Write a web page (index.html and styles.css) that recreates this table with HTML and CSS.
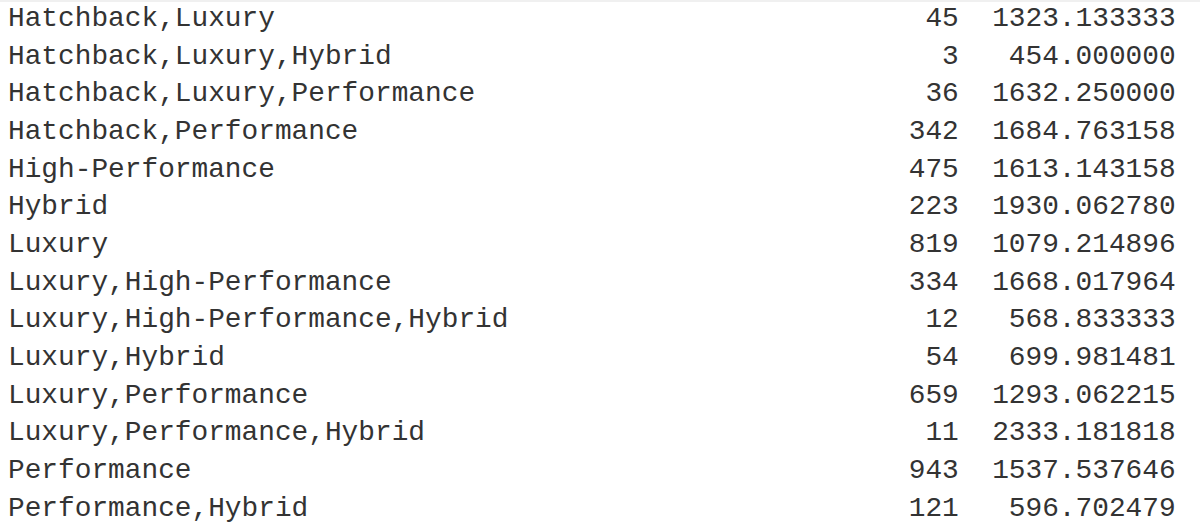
FILE: index.html
```html
<!DOCTYPE html>
<html>
<head>
<meta charset="utf-8">
<link rel="stylesheet" href="styles.css">
</head>
<body>
<div class="topline"></div>
<div class="table">
  <div class="row"><span class="name">Hatchback,Luxury</span><span class="count">45</span><span class="mean">1323.133333</span></div>
  <div class="row"><span class="name">Hatchback,Luxury,Hybrid</span><span class="count">3</span><span class="mean">454.000000</span></div>
  <div class="row"><span class="name">Hatchback,Luxury,Performance</span><span class="count">36</span><span class="mean">1632.250000</span></div>
  <div class="row"><span class="name">Hatchback,Performance</span><span class="count">342</span><span class="mean">1684.763158</span></div>
  <div class="row"><span class="name">High-Performance</span><span class="count">475</span><span class="mean">1613.143158</span></div>
  <div class="row"><span class="name">Hybrid</span><span class="count">223</span><span class="mean">1930.062780</span></div>
  <div class="row"><span class="name">Luxury</span><span class="count">819</span><span class="mean">1079.214896</span></div>
  <div class="row"><span class="name">Luxury,High-Performance</span><span class="count">334</span><span class="mean">1668.017964</span></div>
  <div class="row"><span class="name">Luxury,High-Performance,Hybrid</span><span class="count">12</span><span class="mean">568.833333</span></div>
  <div class="row"><span class="name">Luxury,Hybrid</span><span class="count">54</span><span class="mean">699.981481</span></div>
  <div class="row"><span class="name">Luxury,Performance</span><span class="count">659</span><span class="mean">1293.062215</span></div>
  <div class="row"><span class="name">Luxury,Performance,Hybrid</span><span class="count">11</span><span class="mean">2333.181818</span></div>
  <div class="row"><span class="name">Performance</span><span class="count">943</span><span class="mean">1537.537646</span></div>
  <div class="row"><span class="name">Performance,Hybrid</span><span class="count">121</span><span class="mean">596.702479</span></div>
</div>
</body>
</html>
```
FILE: styles.css
```css
html, body {
  margin: 0;
  padding: 0;
  background: #ffffff;
}
body {
  position: relative;
  width: 1200px;
  height: 529px;
  overflow: hidden;
}
.topline {
  position: absolute;
  top: 0;
  left: 0;
  right: 0;
  height: 2px;
  background: #f0f0f0;
}
.table {
  display: flex;
  flex-direction: column;
  padding-left: 8px;
  font-family: "Liberation Mono", "DejaVu Sans Mono", monospace;
  font-size: 27.8px;
  line-height: 37.65px;
  color: #333333;
}
.row {
  display: grid;
  grid-template-columns: 52ch 5ch 13ch;
  white-space: pre;
}
.count, .mean {
  text-align: right;
}
```
